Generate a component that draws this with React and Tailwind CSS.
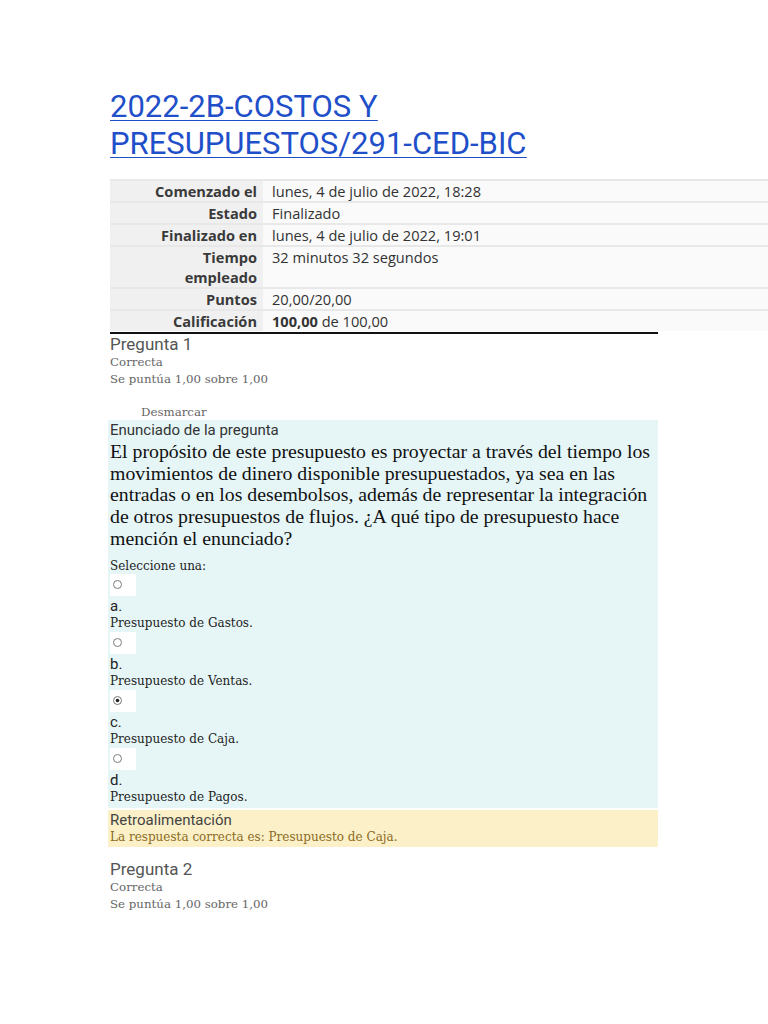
const roboto = { fontFamily: "Roboto, 'Liberation Sans', sans-serif" };

const summary = [
  ["Comenzado el", "lunes, 4 de julio de 2022, 18:28"],
  ["Estado", "Finalizado"],
  ["Finalizado en", "lunes, 4 de julio de 2022, 19:01"],
  [
    <>
      Tiempo
      <br />
      empleado
    </>,
    "32 minutos 32 segundos",
  ],
  ["Puntos", "20,00/20,00"],
  ["Calificación", <><b>100,00</b> de 100,00</>],
];

const options = [
  { letter: "a.", text: "Presupuesto de Gastos.", checked: false },
  { letter: "b.", text: "Presupuesto de Ventas.", checked: false },
  { letter: "c.", text: "Presupuesto de Caja.", checked: true },
  { letter: "d.", text: "Presupuesto de Pagos.", checked: false },
];

function Radio({ checked }) {
  return (
    <div className="w-[26px] h-[22px] bg-white flex items-center pl-[2px]">
      <svg width="11" height="11" viewBox="0 0 11 11">
        <circle cx="5.5" cy="5.5" r="4" fill="#fff" stroke="#7a7a7a" strokeWidth="1" />
        {checked && <circle cx="5.5" cy="5.5" r="1.8" fill="#222" />}
      </svg>
    </div>
  );
}

function QuestionHead({ n }) {
  return (
    <div>
      <div className="text-[17px] leading-[20px] text-[#555]" style={roboto}>
        Pregunta {n}
      </div>
      <div className="font-['DejaVu_Serif',serif] text-[11.8px] leading-[17px] text-[#666]">
        <div>Correcta</div>
        <div>Se puntúa 1,00 sobre 1,00</div>
      </div>
    </div>
  );
}

export default function App() {
  return (
    <div className="bg-white min-h-[1024px] pl-[110px] pt-[88px] overflow-hidden">
      <h1
        className="text-[31px] leading-[37px] text-[#1f4fc9] underline underline-offset-[3px] decoration-1 w-[540px]"
        style={roboto}
      >
        <a href="#" className="text-[#1f4fc9]">
          2022-2B-COSTOS Y PRESUPUESTOS/291-CED-BIC
        </a>
      </h1>

      <table className="mt-[17px] w-[700px] border-collapse text-[14.6px] leading-[20px] font-['Open_Sans',sans-serif] text-[#333]">
        <tbody>
          {summary.map(([label, value], i) => (
            <tr key={i} className="border-t-2 border-[#e8e8e8]">
              <th className="w-[153px] bg-[#f0f0f0] text-right font-bold px-[6px] py-0 align-top text-[#3a3a3a]">
                {label}
              </th>
              <td className="bg-[#fafafa] px-[9px] py-0 align-top">{value}</td>
            </tr>
          ))}
        </tbody>
      </table>
      <div className="w-[548px] h-[2px] mt-[1px] bg-[#111]"></div>

      <div className="w-[548px]">
        <QuestionHead n={1} />

        <div className="mt-[16px] pl-[31px] font-['DejaVu_Serif',serif] text-[11.8px] leading-[16px] text-[#666]">
          Desmarcar
        </div>

        <div className="bg-[#e6f6f7] -ml-[2px] pl-[2px] pb-[2px]">
          <div className="text-[15px] leading-[18px] text-[#333] pt-[1px]" style={roboto}>
            Enunciado de la pregunta
          </div>
          <p className="font-['Liberation_Serif',serif] text-[19.8px] leading-[21.7px] text-[#111] mt-[2px] whitespace-nowrap">
            El propósito de este presupuesto es proyectar a través del tiempo los
            <br />
            movimientos de dinero disponible presupuestados, ya sea en las
            <br />
            entradas o en los desembolsos, además de representar la integración
            <br />
            de otros presupuestos de flujos. ¿A qué tipo de presupuesto hace
            <br />
            mención el enunciado?
          </p>
          <div className="mt-[8px] font-['DejaVu_Serif',serif] text-[12px] leading-[16px] text-[#222]">
            Seleccione una:
          </div>
          <div>
            {options.map((o) => (
              <div key={o.letter}>
                <Radio checked={o.checked} />
                <div className="text-[15px] leading-[18px] text-[#222] mt-[1px]" style={roboto}>
                  {o.letter}
                </div>
                <div className="font-['DejaVu_Serif',serif] text-[12px] leading-[17px] text-[#222]">
                  {o.text}
                </div>
              </div>
            ))}
          </div>
        </div>

        <div className="bg-[#fcf0c8] -ml-[2px] pl-[2px] mt-[2px] pt-[1px] pb-[2px]">
          <div className="text-[15px] leading-[18px] text-[#444]" style={roboto}>
            Retroalimentación
          </div>
          <div className="font-['DejaVu_Serif',serif] text-[12px] leading-[16px] text-[#8a6a1e]">
            La respuesta correcta es: Presupuesto de Caja.
          </div>
        </div>

        <div className="mt-[12px]">
          <QuestionHead n={2} />
        </div>
      </div>
    </div>
  );
}
